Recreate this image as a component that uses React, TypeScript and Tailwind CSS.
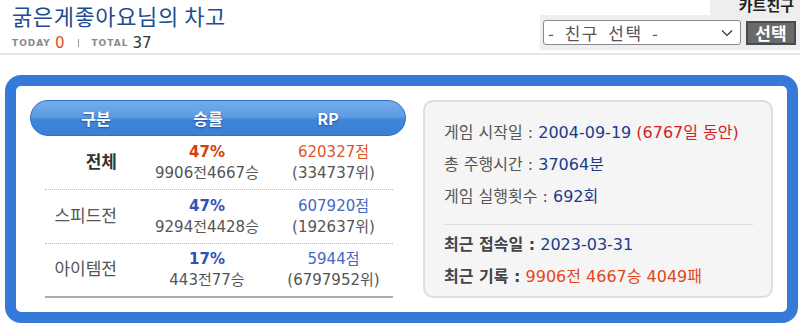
import React from 'react';

type Row = {
    label: string;
    bold?: boolean;
    rate: string;
    record: string;
    rp: string;
    rank: string;
    tone: 'red' | 'blue';
    last?: boolean;
};

const rows: Row[] = [
    { label: '전체', bold: true, rate: '47%', record: '9906전4667승', rp: '620327점', rank: '(334737위)', tone: 'red' },
    { label: '스피드전', rate: '47%', record: '9294전4428승', rp: '607920점', rank: '(192637위)', tone: 'blue' },
    { label: '아이템전', rate: '17%', record: '443전77승', rp: '5944점', rank: '(6797952위)', tone: 'blue', last: true },
];

const Chevron = () => (
    <svg width="12" height="8" viewBox="0 0 12 8" fill="none">
        <path d="M1 1.5 6 6.5 11 1.5" stroke="#333" strokeWidth="1.2" />
    </svg>
);

export default function App() {
    return (
        <div className="w-[800px] h-[324px] bg-white overflow-hidden font-['DejaVu_Sans','Noto_Sans_CJK_KR',sans-serif]">
            {/* Header */}
            <div className="flex justify-between h-[55px] border-b-2 border-[#e6e6e6]">
                <div className="pl-[12px]">
                    <h1 className="text-[22px] leading-[30px] text-[#1f4c8e] font-['Noto_Sans_CJK_KR',sans-serif] tracking-[0.6px]">
                        굵은게좋아요님의 차고
                    </h1>
                    <div className="flex items-center mt-[5px] h-[16px] leading-none">
                        <span className="text-[9px] font-bold tracking-[1px] text-[#8a8a8a]">TODAY</span>
                        <span className="ml-[4px] text-[15px] text-[#e0521a]">0</span>
                        <span className="ml-[14px] w-[1px] h-[8px] bg-[#999]" />
                        <span className="ml-[12px] text-[9px] font-bold tracking-[1px] text-[#8a8a8a]">TOTAL</span>
                        <span className="ml-[4px] text-[15px] text-[#333]">37</span>
                    </div>
                </div>

                <div className="flex flex-col items-end">
                    <div className="w-[90px] h-[15px] bg-[#eeeeee] overflow-hidden text-right pr-[6px]">
                        <div className="-mt-[3px] text-[15px] font-bold leading-none text-[#222] font-['Noto_Sans_CJK_KR',sans-serif]">카트친구</div>
                    </div>
                    <div className="w-[260px] h-[35px] bg-[#eeeeee] flex items-center pl-[3px] gap-[5px]">
                        <div className="w-[198px] h-[25px] bg-white border border-[#8a8a8a] rounded-[3px] flex items-center justify-between pl-[4px] pr-[7px]">
                            <span className="text-[17px] tracking-[1.5px] [word-spacing:4px] text-[#555] font-['Noto_Sans_CJK_KR',sans-serif] leading-none">- 친구 선택 -</span>
                            <Chevron />
                        </div>
                        <button className="w-[50px] h-[24px] bg-[#6a6a6a] border-2 border-[#4a4a4a] text-white text-[17px] font-bold leading-none font-['Noto_Sans_CJK_KR',sans-serif]">
                            선택
                        </button>
                    </div>
                </div>
            </div>

            {/* Garage box */}
            <div className="ml-[5px] mt-[20px] w-[793px] h-[248px] border-[11px] border-[#357ad8] rounded-[16px] p-[14px] flex gap-[17px]">
                {/* Stats table */}
                <div className="w-[376px] flex flex-col">
                    <div className="h-[37px] rounded-full border border-[#2f6fc4] bg-[linear-gradient(to_bottom,#74acea_0%,#5e9de2_45%,#3f86da_55%,#3a80d6_100%)] flex items-center text-white text-[16px] font-bold [text-shadow:0_1px_2px_#1d4f96] font-['Noto_Sans_CJK_KR',sans-serif]">
                        <div className="w-[130px] text-center">구분</div>
                        <div className="w-[94px] text-center">승률</div>
                        <div className="flex-1 text-center pr-[4px]">RP</div>
                    </div>
                    <div className="ml-[15px] mr-[13px]">
                        {rows.map((r) => (
                            <div
                                key={r.label}
                                className={`flex items-center h-[54px] ${r.last ? 'border-b-2 border-solid border-[#acacac]' : 'border-b border-dotted border-[#bdbdbd]'}`}
                            >
                                <div className={`w-[95px] text-right pr-[23px] text-[17px] ${r.bold ? 'font-bold text-[#333]' : 'text-[#555]'}`}>
                                    {r.label}
                                </div>
                                <div className="w-[134px] text-center text-[15px] leading-[21px]">
                                    <div className={`font-bold ${r.tone === 'red' ? 'text-[#d2410f]' : 'text-[#3154b4]'}`}>{r.rate}</div>
                                    <div className="text-[#555]">{r.record}</div>
                                </div>
                                <div className="flex-1 text-center text-[15px] leading-[21px]">
                                    <div className={r.tone === 'red' ? 'text-[#e0542a]' : 'text-[#4468c6]'}>{r.rp}</div>
                                    <div className="text-[#555]">{r.rank}</div>
                                </div>
                            </div>
                        ))}
                    </div>
                </div>

                {/* Info panel */}
                <div className="w-[350px] h-[198px] bg-[#f5f5f5] border-2 border-[#dedede] rounded-[10px] pl-[19px] pr-[18px] pt-[15px] text-[16px] leading-[32px] text-[#555]">
                    <div>
                        게임 시작일 : <span className="text-[#1c3c8a]">2004-09-19</span>{' '}
                        <span className="text-[#d42222]">(6767일 동안)</span>
                    </div>
                    <div>
                        총 주행시간 : <span className="text-[#1c3c8a]">37064분</span>
                    </div>
                    <div>
                        게임 실행횟수 : <span className="text-[#1c3c8a]">692회</span>
                    </div>
                    <div className="mt-[11px] mb-[4px] h-[1px] bg-[#dcdcdc]" />
                    <div>
                        <span className="font-bold text-[#444]">최근 접속일 :</span>{' '}
                        <span className="text-[#1c3c8a]">2023-03-31</span>
                    </div>
                    <div>
                        <span className="font-bold text-[#444]">최근 기록 :</span>{' '}
                        <span className="text-[#e0481a]">9906전 4667승 4049패</span>
                    </div>
                </div>
            </div>
        </div>
    );
}
